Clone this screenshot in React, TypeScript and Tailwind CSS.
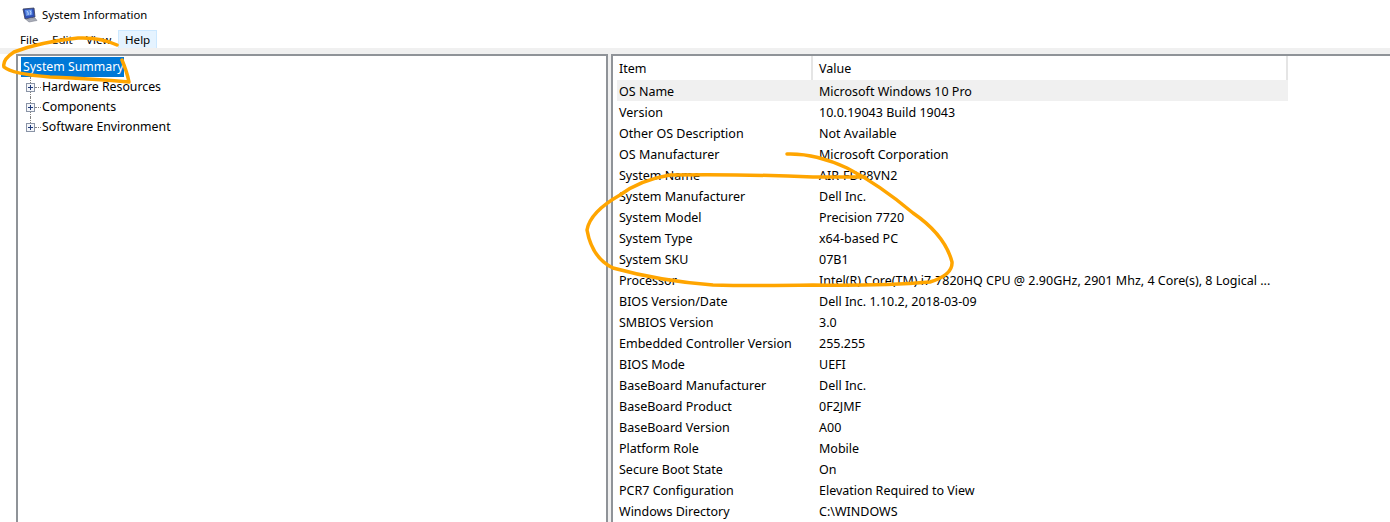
const rows: [string, string][] = [
  ["OS Name", "Microsoft Windows 10 Pro"],
  ["Version", "10.0.19043 Build 19043"],
  ["Other OS Description", "Not Available"],
  ["OS Manufacturer", "Microsoft Corporation"],
  ["System Name", "AIR-FDP8VN2"],
  ["System Manufacturer", "Dell Inc."],
  ["System Model", "Precision 7720"],
  ["System Type", "x64-based PC"],
  ["System SKU", "07B1"],
  ["Processor", "Intel(R) Core(TM) i7-7820HQ CPU @ 2.90GHz, 2901 Mhz, 4 Core(s), 8 Logical ..."],
  ["BIOS Version/Date", "Dell Inc. 1.10.2, 2018-03-09"],
  ["SMBIOS Version", "3.0"],
  ["Embedded Controller Version", "255.255"],
  ["BIOS Mode", "UEFI"],
  ["BaseBoard Manufacturer", "Dell Inc."],
  ["BaseBoard Product", "0F2JMF"],
  ["BaseBoard Version", "A00"],
  ["Platform Role", "Mobile"],
  ["Secure Boot State", "On"],
  ["PCR7 Configuration", "Elevation Required to View"],
  ["Windows Directory", "C:\\WINDOWS"],
];

const treeItems = ["Hardware Resources", "Components", "Software Environment"];

function AppIcon() {
  return (
    <svg width="16" height="16" viewBox="0 0 16 16" className="shrink-0">
      <path d="M1 2 L12 1 L13 10 L3 12 Z" fill="#2f4fb5" stroke="#3a3f55" strokeWidth="0.8" />
      <path d="M3 3 L10 2.6 L10.5 8 L4 9 Z" fill="#5f8fe6" />
      <path d="M5 4 Q7 6 6 8 M8 3.5 Q9.5 5.5 8.5 7.5" stroke="#d8e6ff" strokeWidth="0.8" fill="none" />
      <path d="M4 12.5 L13 11 L15 13.5 L7 15 Z" fill="#a9adb8" stroke="#6d7180" strokeWidth="0.5" />
    </svg>
  );
}

function PlusBox() {
  return (
    <svg width="9" height="9" viewBox="0 0 9 9" className="shrink-0">
      <rect x="0.5" y="0.5" width="8" height="8" fill="#f4f6fa" stroke="#8a94a6" />
      <path d="M2 4.5 H7 M4.5 2 V7" stroke="#1f3a7a" strokeWidth="1" />
    </svg>
  );
}

function TreeRow({ label, last }: { label: string; last: boolean }) {
  return (
    <div className="relative flex h-5 items-center pl-[5px]">
      <div className={`absolute left-[9px] top-0 border-l border-dotted border-[#808080] ${last ? "h-[10px]" : "h-5"}`} />
      <div className="relative z-10 flex items-center">
        <PlusBox />
        <div className="w-[6px] border-t border-dotted border-[#808080]" />
      </div>
      <span className="ml-px whitespace-nowrap">{label}</span>
    </div>
  );
}

export default function App() {
  return (
    <div
      className="relative flex h-[522px] w-[1390px] flex-col overflow-hidden bg-white text-[12.5px] text-black"
      style={{ fontFamily: '"Noto Sans", "Open Sans", sans-serif' }}
    >
      <div className="flex h-[30px] items-center gap-[4px] pl-[22px] text-[11.3px]">
        <AppIcon />
        <span className="pt-[1px]">System Information</span>
      </div>

      <div className="flex h-[18px] items-center pl-[20px] text-[11.6px]">
        <span className="w-[32px] pt-[2px]">File</span>
        <span className="w-[34px] pt-[2px]">Edit</span>
        <span className="w-[32px] pt-[2px]">View</span>
        <span className="flex h-[19px] w-[39px] items-center border border-[#cce8ff] bg-[#e5f3ff] pl-[6px] pt-[1px]">Help</span>
      </div>

      <div className="h-[6px] shrink-0 bg-[#f0f0f0]" />

      <div className="flex min-h-0 flex-1 pl-4">
        <div className="w-[592px] border-x-2 border-t-2 border-[#8f9398] pl-[3px] pt-px text-[12.3px]">
          <div className="flex h-5 w-[103px] items-center whitespace-nowrap bg-[#0078d7] pl-[2px] text-white">System Summary</div>
          {treeItems.map((t, i) => (
            <TreeRow key={t} label={t} last={i === treeItems.length - 1} />
          ))}
        </div>
        <div className="w-[3px] bg-[#f0f0f0]" />
        <div className="flex-1 border-l-2 border-t-2 border-[#8f9398] pl-[4px]">
          <div className="flex h-[24px] w-[671px] items-center border-r-2 border-[#e5e5e5]">
            <span className="h-[24px] w-[196px] border-r-2 border-[#e5e5e5] pl-[2px] pt-[1px] leading-[24px]">Item</span>
            <span className="h-[24px] pl-[6px] pt-[1px] leading-[24px]">Value</span>
          </div>
          {rows.map(([item, value], i) => (
            <div key={item} className={`flex h-[21px] w-[671px] items-center pt-[3px] ${i === 0 ? "bg-[#f0f0f0]" : ""}`}>
              <span className="w-[202px] shrink-0 pl-[2px]">{item}</span>
              <span className="whitespace-nowrap">{value}</span>
            </div>
          ))}
        </div>
      </div>

      <svg className="pointer-events-none absolute inset-0" width="1390" height="522" viewBox="0 0 1390 522" fill="none">
        <path
          d="M117 45 Q100 37 78 38 Q40 42 14 52 Q2 60 4 67 Q12 74 50 77 Q95 79 129 82 Q127 72 122 60"
          stroke="#ffa500"
          strokeWidth="3.5"
          strokeLinecap="round"
          strokeLinejoin="round"
        />
        <path
          d="M787 154 Q815 153 847 168 Q880 185 913 213 Q945 235 952 262 Q953 275 930 282 Q880 286 813 285 Q750 286 713 285 Q660 281 613 268 Q592 258 587 230 Q590 212 620 195 Q640 180 670 175 Q745 174 813 177 L865 177"
          stroke="#ffa500"
          strokeWidth="3.5"
          strokeLinecap="round"
          strokeLinejoin="round"
        />
      </svg>
    </div>
  );
}
